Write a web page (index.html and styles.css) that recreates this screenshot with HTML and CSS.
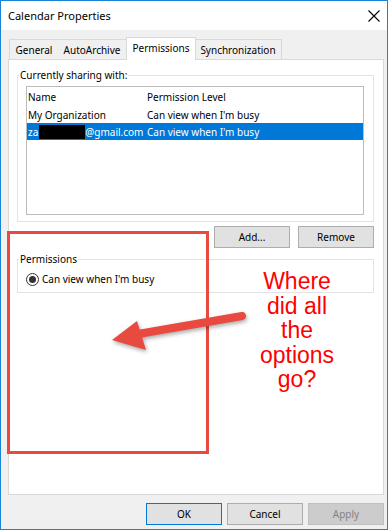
FILE: index.html
```html
<!DOCTYPE html>
<html lang="en">
<head>
<meta charset="UTF-8">
<title>Calendar Properties</title>
<link rel="stylesheet" href="styles.css">
</head>
<body>
<div class="window">
    <div class="titlebar">
        <span class="title">Calendar Properties</span>
        <svg class="close" width="12" height="12" viewBox="0 0 12 12">
            <path d="M0.5 0.5 L11.5 11.5 M11.5 0.5 L0.5 11.5" stroke="#000" stroke-width="1.1" fill="none"/>
        </svg>
    </div>
    <div class="client">
        <div class="tabs">
            <div class="tab tab-general">General</div>
            <div class="tab tab-archive">AutoArchive</div>
            <div class="tab tab-perms active">Permissions</div>
            <div class="tab tab-sync">Synchronization</div>
        </div>
        <div class="panel">
            <fieldset class="group sharing">
                <legend>Currently sharing with:</legend>
                <div class="list">
                    <div class="row">
                        <span class="col-name">Name</span>
                        <span class="col-level">Permission Level</span>
                    </div>
                    <div class="row">
                        <span class="col-name">My Organization</span>
                        <span class="col-level">Can view when I'm busy</span>
                    </div>
                    <div class="row selected">
                        <span class="col-name">za<span class="redact"></span>@gmail.com</span>
                        <span class="col-level">Can view when I'm busy</span>
                    </div>
                </div>
            </fieldset>
            <div class="actions">
                <button class="btn">Add...</button>
                <button class="btn">Remove</button>
            </div>
            <fieldset class="group perms">
                <legend>Permissions</legend>
                <label class="radio"><span class="radio-dot"></span>Can view when I'm busy</label>
            </fieldset>
        </div>
        <div class="footer">
            <button class="btn btn-default">OK</button>
            <button class="btn">Cancel</button>
            <button class="btn" disabled>Apply</button>
        </div>
    </div>

    <!-- annotation drawn over the dialog -->
    <div class="callout-box"></div>
    <svg class="callout-arrow" width="150" height="50" viewBox="105 310 150 50">
        <line x1="242" y1="316" x2="138" y2="334" stroke="#e84a3f" stroke-width="8" stroke-linecap="round"/>
        <polygon points="112,340 137,321 146,350" fill="#e84a3f"/>
    </svg>
    <div class="callout-text">Where<br>did all<br>the<br>options<br>go?</div>
</div>
</body>
</html>
```

FILE: styles.css
```css
body {
    margin: 0;
    background: #fff;
    font-family: "Noto Sans", sans-serif;
    font-size: 10px;
    color: #000;
}
.window {
    position: relative;
    width: 388px;
    height: 530px;
    box-sizing: border-box;
    border: 1px solid #1883d7;
    background: #f0f0f0;
    display: flex;
    flex-direction: column;
}
.titlebar {
    height: 28px;
    background: #fff;
    display: flex;
    align-items: center;
    justify-content: space-between;
    padding: 0 7px 1px 7px;
}
.title {
    font-size: 11px;
}
.close {
    margin-top: 1px;
}
.client {
    flex: 1;
    display: flex;
    flex-direction: column;
}
.tabs {
    display: flex;
    align-items: flex-end;
    height: 22px;
    padding: 7px 0 0 8px;
}
.tab {
    height: 20px;
    box-sizing: border-box;
    border: 1px solid #d9d9d9;
    border-bottom: none;
    background: #f0f0f0;
    display: flex;
    align-items: center;
    justify-content: center;
    margin-left: -1px;
}
.tab-general { width: 50px; margin-left: 0; }
.tab-archive { width: 69px; border-left: none; }
.tab-perms { width: 70px; }
.tab-sync { width: 87px; border-left: none; }
.tab.active {
    height: 23px;
    margin-bottom: -1px;
    background: #fff;
    position: relative;
    z-index: 1;
    padding-bottom: 3px;
}
.panel {
    height: 436px;
    box-sizing: border-box;
    margin: 0 3px 0 7px;
    border: 1px solid #d9d9d9;
    background: #fff;
    padding: 8px 9px 0 8px;
}
.group {
    margin: 0;
    border: 1px solid #e3e3e3;
    padding: 4px 8px 6px 8px;
}
.group legend {
    padding: 0 1px;
    margin-left: -7px;
    line-height: 14px;
}
.list {
    height: 129px;
    box-sizing: border-box;
    border: 1px solid #bcbcbc;
    margin-right: 1px;
}
.row {
    display: flex;
    height: 17px;
    align-items: center;
    white-space: nowrap;
}
.row:first-child {
    height: 19px;
}
.col-name {
    width: 118px;
    padding-left: 1px;
    overflow: hidden;
}
.col-level {
    padding-left: 1px;
}
.row.selected {
    background: #0078d7;
    color: #fff;
}
.redact {
    display: inline-block;
    width: 46px;
    height: 14px;
    background: #000;
    vertical-align: -3px;
    margin-left: 1px;
}
.actions {
    display: flex;
    justify-content: flex-end;
    gap: 8px;
    margin-top: 4px;
}
.btn {
    width: 76px;
    height: 22px;
    border: 1px solid #adadad;
    background: #e1e1e1;
    font-family: "Noto Sans", sans-serif;
    font-size: 10px;
    color: #000;
    padding: 0;
}
.btn-default {
    border-color: #0078d7;
}
.btn:disabled {
    background: #cccccc;
    border-color: #bfbfbf;
    color: #838383;
}
.perms {
    margin-top: 4px;
    padding-top: 5px;
    padding-bottom: 5px;
}
.radio {
    display: flex;
    align-items: center;
    height: 16px;
    gap: 3px;
}
.radio-dot {
    width: 11px;
    height: 11px;
    border: 1px solid #333;
    border-radius: 50%;
    display: flex;
    align-items: center;
    justify-content: center;
}
.radio-dot::after {
    content: "";
    width: 7px;
    height: 7px;
    border-radius: 50%;
    background: #333;
}
.footer {
    display: flex;
    justify-content: flex-end;
    gap: 5px;
    padding: 8px 3px 0 0;
}
.callout-box {
    position: absolute;
    left: 6px;
    top: 230px;
    width: 196px;
    height: 217px;
    border: 3px solid #e84a3f;
}
.callout-arrow {
    position: absolute;
    left: 104px;
    top: 309px;
    filter: drop-shadow(1px 2px 2px rgba(0, 0, 0, 0.35));
}
.callout-text {
    position: absolute;
    left: 236px;
    top: 268px;
    width: 120px;
    text-align: center;
    font-family: "Liberation Sans", Arial, sans-serif;
    font-size: 23px;
    line-height: 24.5px;
    color: #ff0000;
}
```
